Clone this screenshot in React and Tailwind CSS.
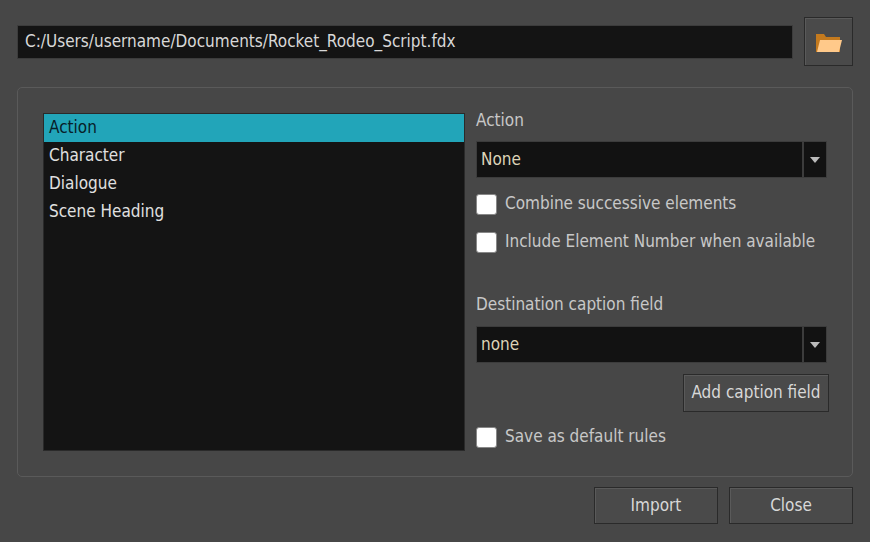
export default function App() {
  const f = { fontFamily: '"DejaVu Sans Condensed","DejaVu Sans",sans-serif' };
  const Check = ({ label }) => (
    <div className="flex items-center h-[22px]">
      <div className="w-[21px] h-[21px] bg-white rounded-[3px] border border-[#888]" />
      <span className="ml-[8px] text-[#c8c8c8]">{label}</span>
    </div>
  );
  const Combo = ({ v }) => (
    <div className="flex h-[37px] w-[351px] border border-[#3c3c3c]">
      <div className="flex-1 bg-[#121212] flex items-center pl-[4px] text-[#ddd4b8]">{v}</div>
      <div className="w-[24px] bg-[#121212] border-l-[2px] border-[#3c3c3c] flex items-center justify-center">
        <svg width="10" height="6"><path d="M0 0h10L5 6z" fill="#bbb" /></svg>
      </div>
    </div>
  );
  const Btn = ({ children, cls }) => (
    <div className={"flex items-center justify-center bg-[#4a4a4a] border border-[#2a2a2a] shadow-[inset_1px_1px_0_#5a5a5a] text-[#d8d8d8] " + cls}>{children}</div>
  );
  return (
    <div className="w-[870px] h-[542px] bg-[#474747] text-[17px] relative" style={f}>
      <div className="flex items-center pt-[17px] pl-[17px]">
        <div className="w-[776px] h-[34px] bg-[#141414] border border-[#3c3c3c] flex items-center pl-[7px] text-[#d8d8d8]">
          C:/Users/username/Documents/Rocket_Rodeo_Script.fdx
        </div>
        <Btn cls="ml-[11px] w-[49px] h-[49px]">
          <svg width="30" height="24" viewBox="0 0 30 24">
            <path d="M2 4h8l2 3h14v15H2z" fill="#c47a1e" />
            <path d="M6 10h22l-3 12H3z" fill="#ffc98a" />
          </svg>
        </Btn>
      </div>
      <div className="ml-[17px] mt-[21px] w-[836px] h-[390px] border border-[#5a5a5a] rounded-[5px] flex pt-[25px] pl-[25px]">
        <div className="w-[422px] h-[338px] bg-[#141414] border border-[#2a2a2a] text-[#e0e0e0]">
          <div className="h-[28px] bg-[#22a5b9] text-[#082028] flex items-center pl-[5px]">Action</div>
          {["Character", "Dialogue", "Scene Heading"].map(t => (
            <div key={t} className="h-[28px] flex items-center pl-[5px]">{t}</div>
          ))}
        </div>
        <div className="ml-[11px] flex flex-col text-[#c8c8c8]">
          <div className="h-[20px] -mt-[3px] leading-[20px]">Action</div>
          <div className="mt-[11px]"><Combo v="None" /></div>
          <div className="mt-[15px]"><Check label="Combine successive elements" /></div>
          <div className="mt-[16px]"><Check label="Include Element Number when available" /></div>
          <div className="mt-[41px] h-[20px] leading-[20px]">Destination caption field</div>
          <div className="mt-[12px]"><Combo v="none" /></div>
          <div className="mt-[11px] flex justify-end w-[353px]">
            <Btn cls="w-[146px] h-[38px]">Add caption field</Btn>
          </div>
          <div className="mt-[14px]"><Check label="Save as default rules" /></div>
        </div>
      </div>
      <div className="flex justify-end gap-[11px] pr-[17px] mt-[10px]">
        <Btn cls="w-[124px] h-[37px]">Import</Btn>
        <Btn cls="w-[124px] h-[37px]">Close</Btn>
      </div>
    </div>
  );
}
